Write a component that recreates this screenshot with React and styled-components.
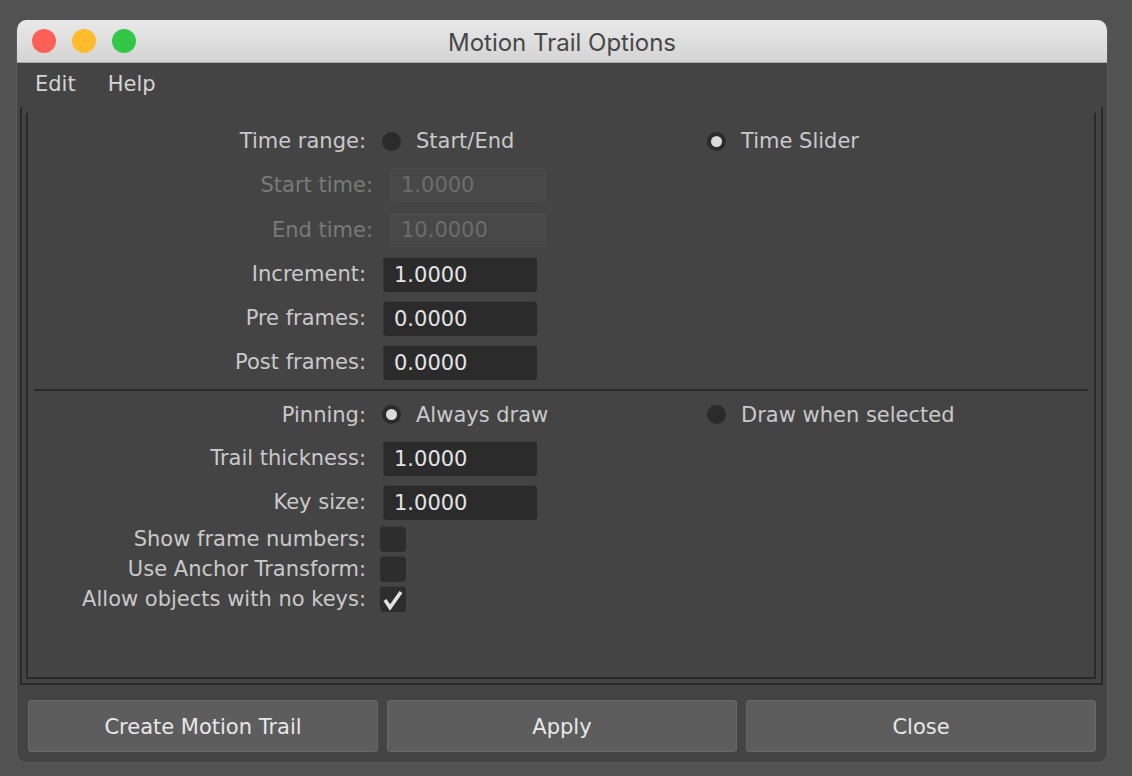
import React from 'react';
import styled, { createGlobalStyle } from 'styled-components';

const GlobalStyle = createGlobalStyle`
  html, body {
    margin: 0;
    padding: 0;
    background: #525252;
  }
  body {
    font-family: "DejaVu Sans", "Liberation Sans", sans-serif;
  }
`;

const Page = styled.div`
  width: 1132px;
  height: 776px;
  box-sizing: border-box;
  padding: 20px 0 0 16px;
`;

const Window = styled.div`
  width: 1092px;
  height: 743px;
  box-sizing: border-box;
  background: #444444;
  border: 1px solid #5c5c5c;
  border-top: none;
  border-radius: 10px;
  overflow: hidden;
  display: flex;
  flex-direction: column;
`;

const TitleBar = styled.div`
  height: 43px;
  box-sizing: border-box;
  background: linear-gradient(#e9e9e9, #d4d4d4);
  border-bottom: 1px solid #a9a9a9;
  display: grid;
  grid-template-columns: 1fr auto 1fr;
  align-items: center;
`;

const Lights = styled.div`
  display: flex;
  gap: 16px;
  padding-left: 15px;
`;

const Light = styled.span`
  width: 24px;
  height: 24px;
  border-radius: 50%;
  background: ${p => p.$color};
`;

const Title = styled.div`
  font-family: Inter, "Noto Sans", sans-serif;
  font-size: 24px;
  color: #474747;
  padding-top: 3px;
`;

const MenuBar = styled.div`
  height: 44px;
  box-sizing: border-box;
  padding: 0 0 3px 18px;
  display: flex;
  align-items: center;
  gap: 32px;
  color: #d4d4d4;
  font-size: 21px;
`;

const OuterFrame = styled.div`
  flex: 1;
  margin: 0 4px 0 3px;
  padding: 6px 5px 4px 4px;
  border: 2px solid #2a2a2a;
  border-top: none;
  display: flex;
`;

const InnerFrame = styled.div`
  flex: 1;
  padding-top: 6px;
  border: 2px solid #2a2a2a;
  border-top: none;
  display: flex;
  flex-direction: column;
`;

const Row = styled.div`
  height: ${p => p.$h || 44}px;
  margin-bottom: ${p => p.$mb || 0}px;
  padding-left: ${p => p.$indent || 0}px;
  display: flex;
  align-items: center;
`;

const Label = styled.div`
  width: 338px;
  flex-shrink: 0;
  text-align: right;
  margin-right: ${p => p.$gap ?? 17}px;
  font-size: 21px;
  color: ${p => (p.$disabled ? '#7a7a7a' : '#c9c9c9')};
  white-space: nowrap;
`;

const Field = styled.div`
  width: 154px;
  height: 35px;
  box-sizing: border-box;
  padding-left: 10px;
  display: flex;
  align-items: center;
  border-radius: 3px;
  background: #2b2b2b;
  border-top: 1px solid #3d3d3d;
  border-left: 1px solid #363636;
  font-size: 21px;
  color: #e4e4e4;
`;

const DisabledField = styled(Field)`
  width: 156px;
  height: 34px;
  padding-left: 10px;
  background: #484848;
  border: 1px solid #4b4b4b;
  color: #6c6c6c;
`;

const RadioOption = styled.div`
  width: ${p => p.$w || 'auto'};
  display: flex;
  align-items: center;
  gap: 15px;
  font-size: 21px;
  color: #c9c9c9;
`;

const RadioDot = styled.span`
  width: 19px;
  height: 19px;
  box-sizing: border-box;
  border-radius: 50%;
  background: ${p => (p.$on ? '#dadada' : '#2b2b2b')};
  border: ${p => (p.$on ? '4px solid #2b2b2b' : 'none')};
`;

const Divider = styled.div`
  height: 2px;
  background: #2b2b2b;
  margin: 5px 6px 2px 6px;
`;

const CheckBox = styled.div`
  width: 26px;
  height: 26px;
  box-sizing: border-box;
  border-radius: 4px;
  background: #2d2d2d;
  border-top: 1px solid #3a3a3a;
  display: flex;
  align-items: center;
  justify-content: center;
`;

const ButtonRow = styled.div`
  height: 52px;
  margin: 15px 0 10px;
  padding: 0 11px;
  display: flex;
  gap: 9px;
`;

const Button = styled.button`
  flex: 1;
  background: #5d5d5d;
  border: 1px solid #686868;
  border-radius: 3px;
  color: #e8e8e8;
  font-family: "DejaVu Sans", sans-serif;
  font-size: 21px;
  padding: 1px 0 0;
`;

const Check = () => (
  <svg width="22" height="22" viewBox="0 0 22 22">
    <path d="M3 11 L8 18.5 L19 3" fill="none" stroke="#e2e2e2" strokeWidth="3.6" strokeLinejoin="miter" />
  </svg>
);

const NumberRow = ({ label, value, disabled, h }) => (
  <Row $indent={disabled ? 7 : 0} $h={h}>
    <Label $disabled={disabled}>{label}</Label>
    {disabled ? <DisabledField>{value}</DisabledField> : <Field>{value}</Field>}
  </Row>
);

const RadioRow = ({ label, options, selected, h }) => (
  <Row $h={h}>
    <Label $gap={16}>{label}</Label>
    {options.map((o, i) => (
      <RadioOption key={o} $w={i === 0 ? '325px' : 'auto'}>
        <RadioDot $on={i === selected} />
        {o}
      </RadioOption>
    ))}
  </Row>
);

const CheckRow = ({ label, checked }) => (
  <Row $h={26} $mb={4}>
    <Label $gap={14}>{label}</Label>
    <CheckBox>{checked && <Check />}</CheckBox>
  </Row>
);

export default function App() {
  return (
    <Page>
      <GlobalStyle />
      <Window>
        <TitleBar>
          <Lights>
            <Light $color="#fe5f57" />
            <Light $color="#febb2e" />
            <Light $color="#33c748" />
          </Lights>
          <Title>Motion Trail Options</Title>
          <div />
        </TitleBar>
        <MenuBar>
          <span>Edit</span>
          <span>Help</span>
        </MenuBar>
        <OuterFrame>
          <InnerFrame>
            <RadioRow label="Time range:" options={['Start/End', 'Time Slider']} selected={1} />
            <NumberRow label="Start time:" value="1.0000" disabled />
            <NumberRow label="End time:" value="10.0000" disabled h={45} />
            <NumberRow label="Increment:" value="1.0000" />
            <NumberRow label="Pre frames:" value="0.0000" />
            <NumberRow label="Post frames:" value="0.0000" />
            <Divider />
            <RadioRow label="Pinning:" options={['Always draw', 'Draw when selected']} selected={0} h={43} />
            <NumberRow label="Trail thickness:" value="1.0000" />
            <Row $h={44} $mb={2}>
              <Label>Key size:</Label>
              <Field>1.0000</Field>
            </Row>
            <CheckRow label="Show frame numbers:" />
            <CheckRow label="Use Anchor Transform:" />
            <CheckRow label="Allow objects with no keys:" checked />
          </InnerFrame>
        </OuterFrame>
        <ButtonRow>
          <Button>Create Motion Trail</Button>
          <Button>Apply</Button>
          <Button>Close</Button>
        </ButtonRow>
      </Window>
    </Page>
  );
}
